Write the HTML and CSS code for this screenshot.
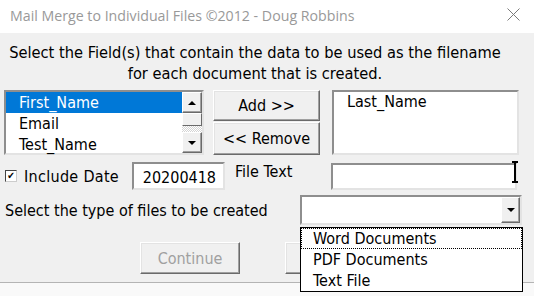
FILE: index.html
```html
<!DOCTYPE html>
<html dir="ltr" lang="en">
<head>
	<meta charset="UTF-8">
	<meta name="viewport" content="width=device-width">
	<title>Mail Merge to Individual Files</title>
	<link rel="stylesheet" href="styles.css">
</head>
<body>
<div class="titlebar">
	<span class="title">Mail Merge to Individual Files &copy;2012 - Doug Robbins</span>
	<svg class="close" width="13" height="13" viewBox="0 0 13 13"><path d="M0.5 0.5 L12.5 12.5 M12.5 0.5 L0.5 12.5" stroke="#7a7a7a" stroke-width="1" fill="none"/></svg>
</div>
<div class="dialog">
	<p class="prompt">Select the Field(s) that contain the data to be used as the filename<br>for each document that is created.</p>

	<div class="fields">
		<div class="listbox source">
			<div class="items">
				<div class="item selected">First_Name</div>
				<div class="item">Email</div>
				<div class="item">Test_Name</div>
			</div>
			<div class="scrollbar">
				<div class="sbtn"><span class="arrow up"></span></div>
				<div class="thumb"></div>
				<div class="track"></div>
				<div class="sbtn"><span class="arrow down"></span></div>
			</div>
		</div>
		<div class="movers">
			<button class="btn add">Add &gt;&gt;</button>
			<button class="btn remove">&lt;&lt; Remove</button>
		</div>
		<div class="listbox target">
			<div class="item">Last_Name</div>
		</div>
	</div>

	<div class="daterow">
		<label class="check"><span class="box">&#10004;</span> Include Date</label>
		<div class="textbox date">20200418</div>
		<span class="filetext">File Text</span>
		<div class="textbox file"><span class="ibeam"></span></div>
	</div>

	<div class="typerow">
		<span>Select the type of files to be created</span>
		<div class="combo">
			<div class="combo-value"></div>
			<div class="sbtn dropbtn"><span class="arrow down"></span></div>
			<div class="droplist">
				<div class="opt focused">Word Documents</div>
				<div class="opt">PDF Documents</div>
				<div class="opt">Text File</div>
			</div>
		</div>
	</div>

	<div class="actions">
		<button class="btn continue" disabled>Continue</button>
		<button class="btn cancel"></button>
	</div>
</div>
</body>
</html>
```
FILE: styles.css
```css
html { height: 100%; }

body {
	margin: 0;
	height: 100%;
	background: #f9f9f9;
	font-family: "DejaVu Sans Condensed", "DejaVu Sans", sans-serif;
	font-size: 16px;
	color: #000;
}

.titlebar {
	height: 33px;
	background: #fff;
	display: flex;
	align-items: center;
	justify-content: space-between;
	padding: 0 14px 0 10px;
}

.title {
	font-family: "Open Sans", sans-serif;
	font-size: 14.2px;
	color: #999;
	margin-top: -2px;
}

.close { margin-top: -4px; }

.dialog {
	height: 250px;
	background: #f0f0f0;
	border-bottom: 1px solid #b4b4b4;
	box-sizing: border-box;
	padding: 9px 0 0 4px;
	position: relative;
}

.prompt {
	margin: 0;
	text-align: center;
	line-height: 21px;
	font-size: 16.3px;
	padding-right: 28px;
}

/* sunken field look */
.listbox, .textbox, .combo-value {
	background: #fff;
	border-top: 2px solid #8e8e8e;
	border-left: 2px solid #8e8e8e;
	border-right: 2px solid #e3e3e3;
	border-bottom: 2px solid #e3e3e3;
	box-sizing: border-box;
}

.fields {
	display: flex;
	margin-top: 6px;
	height: 65px;
}

.listbox { height: 65px; }

.source {
	width: 200px;
	display: flex;
}

.items { flex: 1; }

.item {
	height: 21px;
	line-height: 21px;
	padding-left: 13px;
}

.selected {
	background: #0078d7;
	color: #fff;
}

.scrollbar {
	width: 20px;
	display: flex;
	flex-direction: column;
}

.sbtn {
	background: #f0f0f0;
	border-top: 1px solid #fff;
	border-left: 1px solid #fff;
	border-right: 1px solid #6a6a6a;
	border-bottom: 1px solid #6a6a6a;
	box-shadow: inset -1px -1px 0 #a0a0a0;
	box-sizing: border-box;
	display: flex;
	align-items: center;
	justify-content: center;
}

.scrollbar .sbtn { height: 21px; }

.thumb {
	height: 13px;
	background: #f0f0f0;
	border-top: 1px solid #fff;
	border-left: 1px solid #fff;
	border-right: 1px solid #6a6a6a;
	border-bottom: 1px solid #6a6a6a;
	box-sizing: border-box;
}

.track {
	flex: 1;
	background-color: #fff;
	background-image: repeating-conic-gradient(#d4d4d4 0 25%, #fff 0 50%);
	background-size: 2px 2px;
}

.arrow {
	width: 0;
	height: 0;
	border-left: 4px solid transparent;
	border-right: 4px solid transparent;
}

.arrow.up { border-bottom: 4px solid #000; }
.arrow.down { border-top: 4px solid #000; }

.movers {
	display: flex;
	flex-direction: column;
	margin-left: 9px;
	width: 107px;
	gap: 1px;
}

.btn {
	font: inherit;
	color: #000;
	background: #f0f0f0;
	border-top: 1px solid #fff;
	border-left: 1px solid #fff;
	border-right: 1px solid #6a6a6a;
	border-bottom: 1px solid #6a6a6a;
	box-shadow: inset -1px -1px 0 #a0a0a0, inset 1px 1px 0 #e3e3e3;
	padding: 0;
}

.add { height: 31px; }
.remove { height: 33px; }

.target {
	width: 187px;
	margin-left: 12px;
}

.target .item {
	padding-left: 13px;
	line-height: 20px;
	height: 20px;
}

.daterow {
	display: flex;
	align-items: center;
	margin-top: 7px;
	height: 28px;
}

.check {
	display: flex;
	align-items: center;
	margin-left: 1px;
	width: 120px;
	letter-spacing: 0.3px;
}

.box {
	width: 12px;
	height: 12px;
	box-sizing: border-box;
	border-top: 1px solid #444;
	border-left: 1px solid #444;
	border-right: 1px solid #ccc;
	border-bottom: 1px solid #ccc;
	background: #fff;
	font-size: 10px;
	line-height: 10px;
	text-align: center;
	margin-right: 7px;
	letter-spacing: 0;
}

.textbox { height: 28px; }

.date {
	width: 93px;
	margin-left: 7px;
	text-align: right;
	padding-right: 7px;
	line-height: 24px;
	padding-top: 2px;
}

.filetext {
	margin-left: 10px;
	align-self: flex-start;
	width: 96px;
}

.file {
	width: 186px;
	height: 27px;
	position: relative;
}

.ibeam {
	position: absolute;
	right: -1px;
	top: -4px;
	width: 2px;
	height: 22px;
	background: #000;
}

.ibeam::before, .ibeam::after {
	content: "";
	position: absolute;
	left: -2px;
	width: 6px;
	height: 2px;
	background: #000;
}

.ibeam::before { top: 0; }
.ibeam::after { bottom: 0; }

.typerow {
	display: flex;
	align-items: center;
	justify-content: space-between;
	margin-top: 5px;
	height: 30px;
	padding-right: 12px;
}

.typerow span { margin-left: 1px; }

.combo {
	width: 222px;
	height: 30px;
	position: relative;
}

.combo-value {
	height: 30px;
	width: 100%;
}

.dropbtn {
	position: absolute;
	right: 2px;
	top: 2px;
	width: 19px;
	height: 26px;
}

.droplist {
	position: absolute;
	left: 0;
	top: 32px;
	width: 223px;
	background: #fff;
	border: 1px solid #000;
	box-sizing: border-box;
	z-index: 2;
}

.opt {
	height: 21px;
	line-height: 21px;
	padding-left: 12px;
	box-sizing: border-box;
}

.focused {
	outline: 1px dotted #000;
	outline-offset: -1px;
}

.actions {
	display: flex;
	margin-top: 17px;
	padding-left: 136px;
	gap: 45px;
}

.actions .btn {
	width: 100px;
	height: 32px;
}

.continue { color: #a0a0a0; }
```
